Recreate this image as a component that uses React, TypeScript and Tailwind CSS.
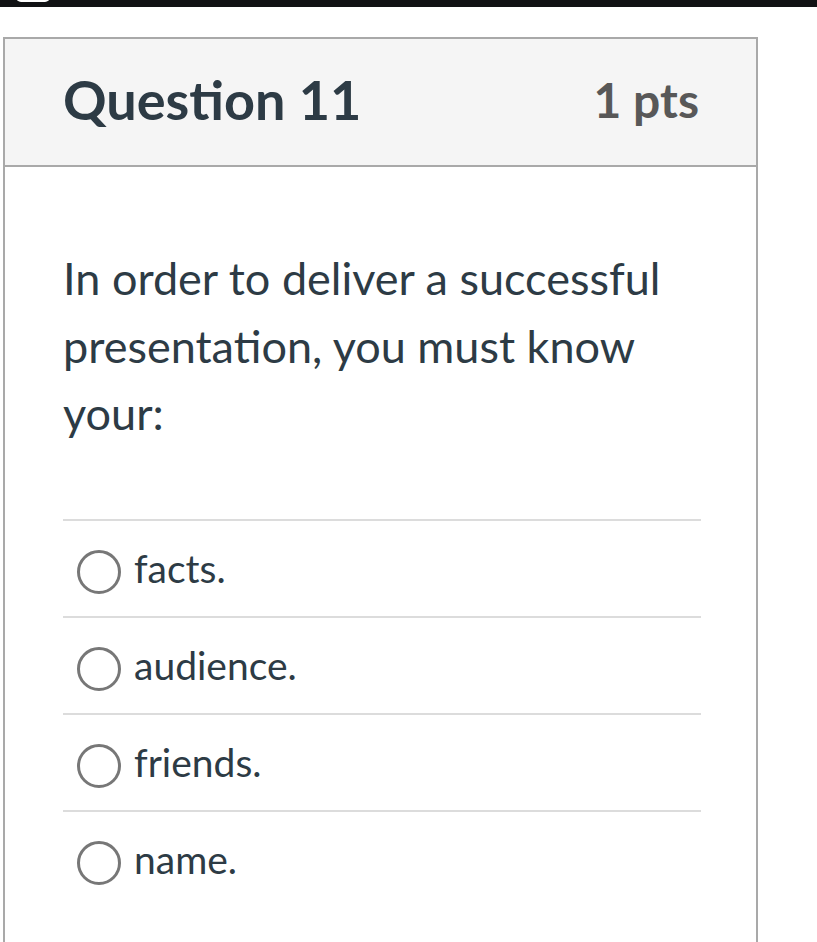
import React from "react";

const answers = ["facts.", "audience.", "friends.", "name."];

export default function App() {
  return (
    <div className="min-h-screen bg-white font-['Lato',sans-serif] text-[#2d3b45]">
      {/* top bar */}
      <div className="flex h-[7px] overflow-hidden bg-[#111214] pl-[16px]">
        <div className="-mt-[10px] h-[12px] w-[34px] rounded-[5px] bg-white" />
      </div>

      <div className="ml-[3px] mt-[30px] w-[755px] border-2 border-b-0 border-[#a9a9a9]">
        {/* header */}
        <div className="flex h-[128px] items-center justify-between border-b-2 border-[#a9a9a9] bg-[#f5f5f5] pb-[5px] pl-[58px] pr-[57px]">
          <h2 className="text-[54px] font-bold leading-none">Question 11</h2>
          <div className="text-[48px] font-bold leading-none text-[#585858]">1 pts</div>
        </div>

        {/* body */}
        <div className="pb-[120px] pl-[58px] pr-[55px] pt-[78px]">
          <p className="text-[45px] leading-[1.5]">
            In order to deliver a successful presentation, you must know your:
          </p>

          <div className="mt-[71px]">
            {answers.map((a) => (
              <div
                key={a}
                className="flex h-[97px] items-start border-t-2 border-[#dcdcdc] pl-[14px]"
              >
                <span className="mt-[29px] h-[44px] w-[44px] shrink-0 rounded-full border-[3px] border-[#777777]" />
                <span className="ml-[13px] mt-[28px] text-[39px] leading-none">{a}</span>
              </div>
            ))}
          </div>
        </div>
      </div>
    </div>
  );
}
